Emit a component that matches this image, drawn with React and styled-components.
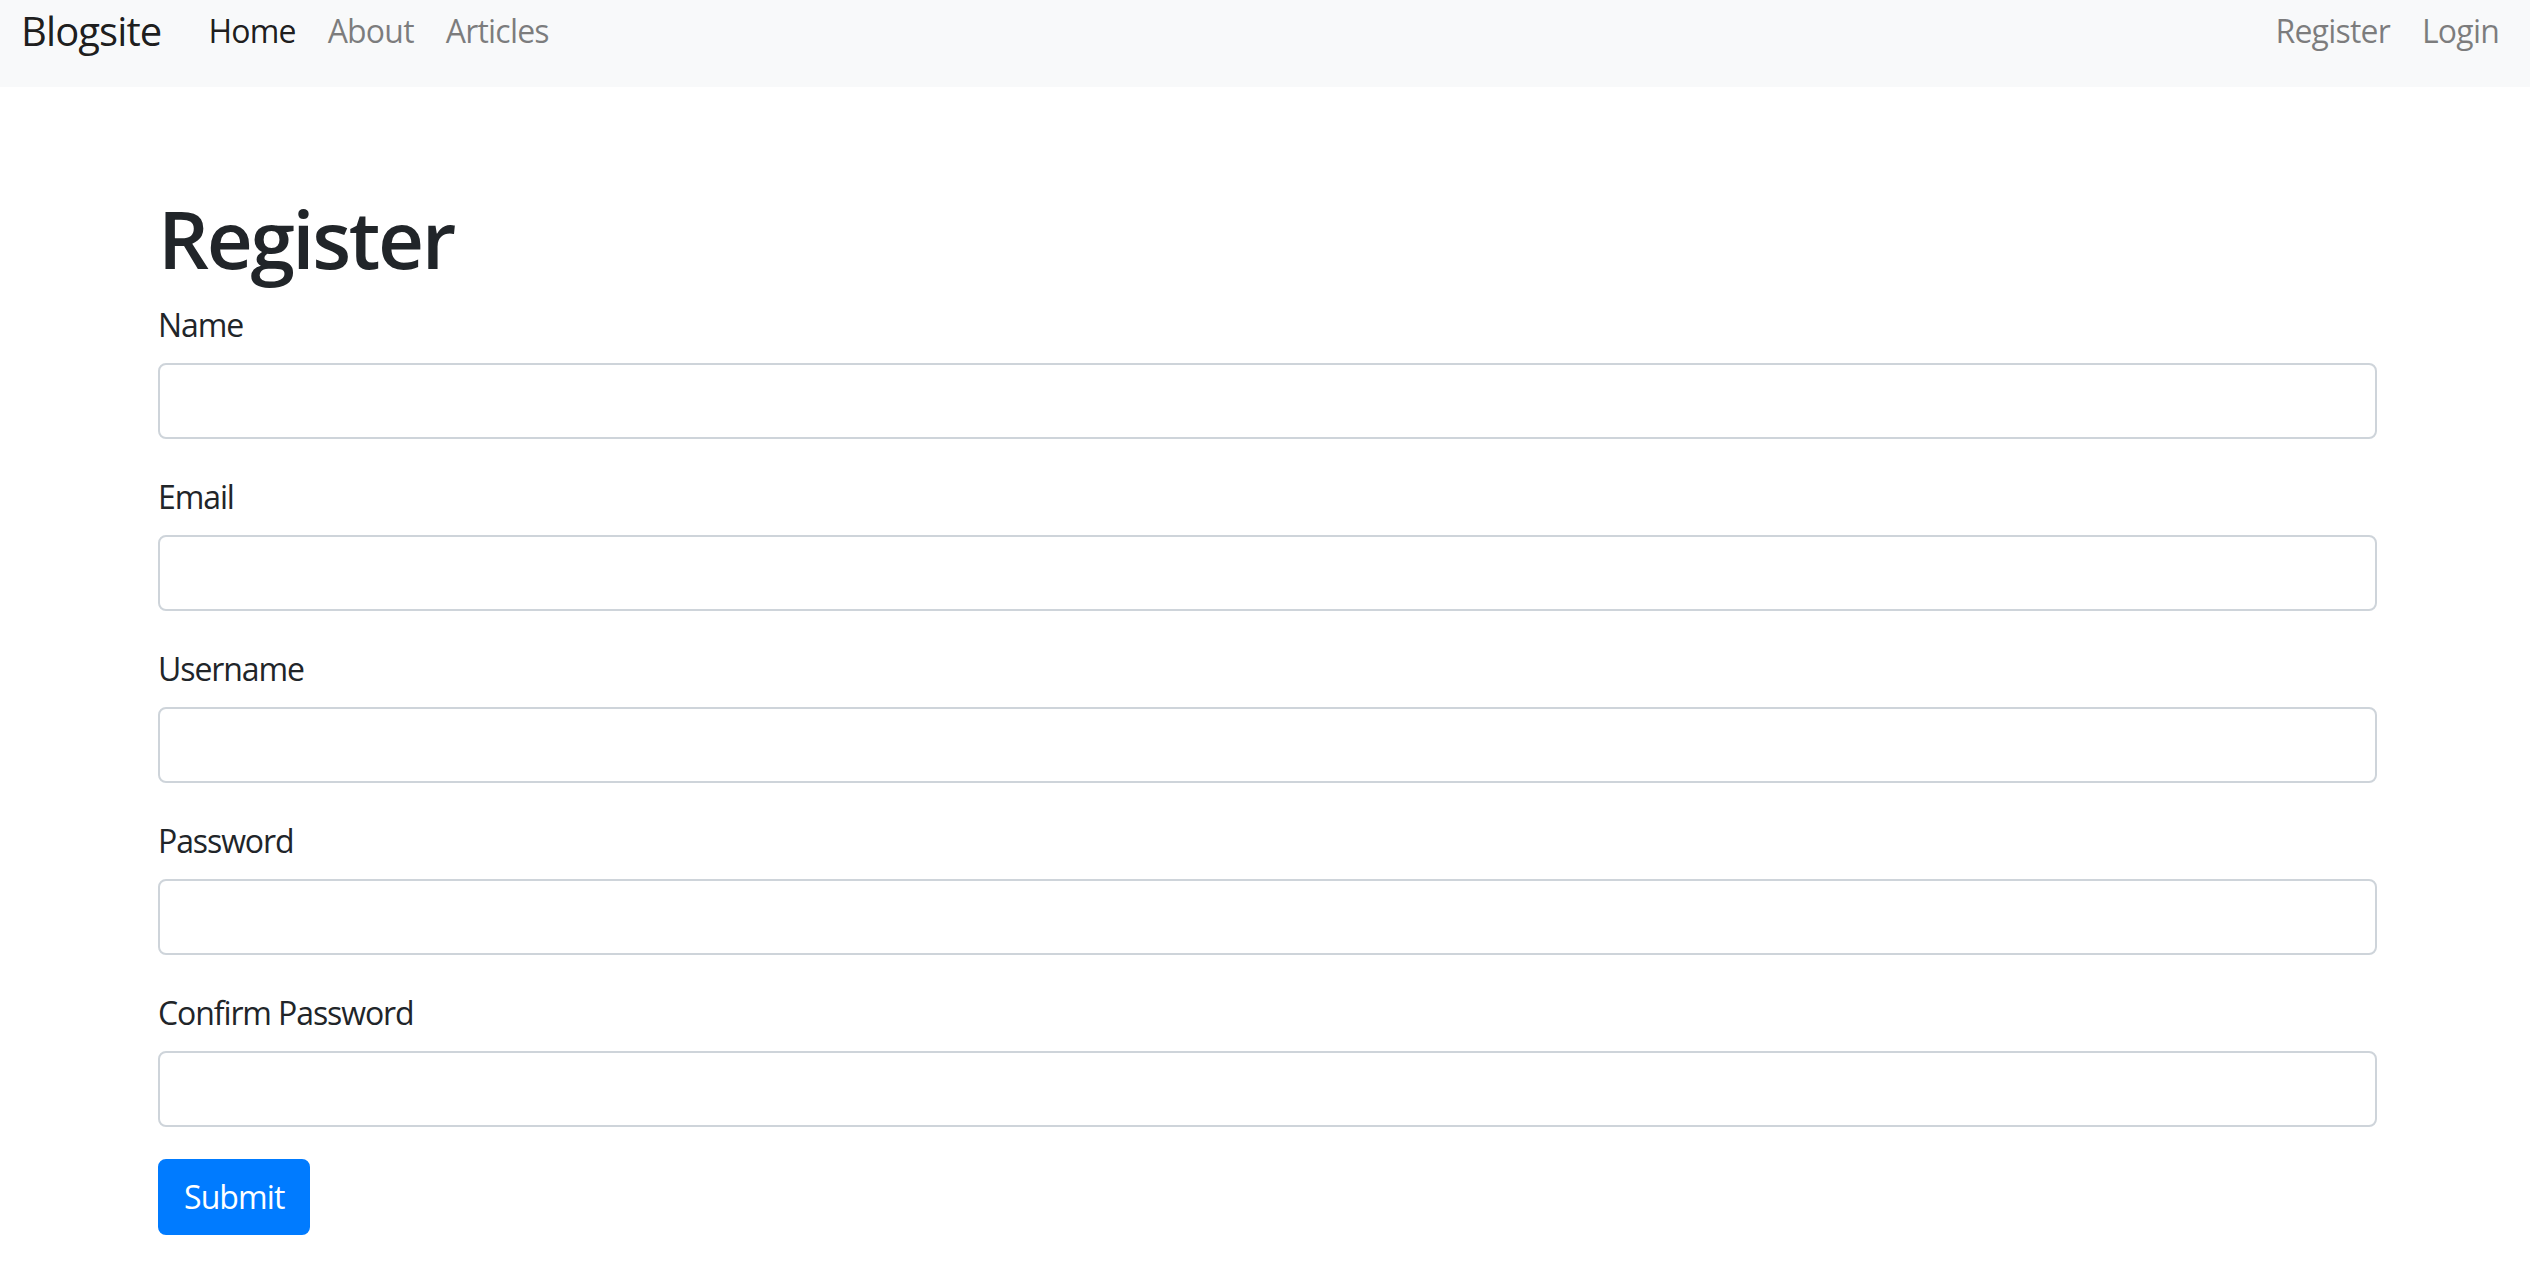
import React from "react";
import styled, { createGlobalStyle } from "styled-components";

const Global = createGlobalStyle`
  html, body { margin: 0; padding: 0; background: #fff; }
  body {
    font-family: "Open Sans", "Noto Sans", "Liberation Sans", sans-serif;
    color: #212529;
    font-size: 32px;
    line-height: 1.5;
  }
  * { box-sizing: border-box; }
`;

const Navbar = styled.nav`
  height: 87px;
  background: #f8f9fa;
  padding: 0 15px 0 21px;
  display: flex;
  align-items: flex-start;
  justify-content: space-between;
`;

const NavLeft = styled.div`
  display: flex;
  align-items: flex-start;
`;

const Brand = styled.a`
  font-size: 40px;
  line-height: 60px;
  padding-top: 1px;
  color: rgba(0, 0, 0, 0.9);
  text-decoration: none;
  margin-right: 31px;
  letter-spacing: -0.9px;
`;

const NavList = styled.div`
  display: flex;
`;

const NavLink = styled.a`
  font-size: 32px;
  line-height: 48px;
  padding: 7px 16px 0;
  color: ${(p) => (p.$active ? "rgba(0,0,0,0.9)" : "rgba(0,0,0,0.5)")};
  text-decoration: none;
  letter-spacing: -0.8px;
`;

const Main = styled.main`
  width: 2219px;
  margin-left: 158px;
  padding-top: 103px;
`;

const Title = styled.h1`
  margin: 0 0 13px;
  font-size: 80px;
  line-height: 96px;
  font-weight: 600;
  letter-spacing: -2.4px;
  color: #212529;
`;

const Group = styled.div`
  margin-bottom: 32px;
`;

const Label = styled.label`
  display: block;
  font-size: 32px;
  line-height: 48px;
  padding-top: 2px;
  margin-bottom: 14px;
  letter-spacing: -1.1px;
`;

const Input = styled.input`
  display: block;
  width: 100%;
  height: 76px;
  padding: 12px 24px;
  font-size: 32px;
  font-family: inherit;
  border: 2px solid #ced4da;
  border-radius: 8px;
  background: #fff;
  color: #495057;
  outline: none;
`;

const Button = styled.button`
  height: 76px;
  padding: 0 24px;
  font-size: 32px;
  font-family: inherit;
  line-height: 48px;
  color: #fff;
  background: #007bff;
  border: 2px solid #007bff;
  border-radius: 8px;
  letter-spacing: -0.9px;
  cursor: pointer;
`;

const fields = [
  { label: "Name", type: "text" },
  { label: "Email", type: "email" },
  { label: "Username", type: "text" },
  { label: "Password", type: "password" },
  { label: "Confirm Password", type: "password" },
];

export default function App() {
  return (
    <>
      <Global />
      <Navbar>
        <NavLeft>
          <Brand href="#">Blogsite</Brand>
          <NavList>
            <NavLink href="#" $active>Home</NavLink>
            <NavLink href="#">About</NavLink>
            <NavLink href="#">Articles</NavLink>
          </NavList>
        </NavLeft>
        <NavList>
          <NavLink href="#">Register</NavLink>
          <NavLink href="#">Login</NavLink>
        </NavList>
      </Navbar>
      <Main>
        <Title>Register</Title>
        <form onSubmit={(e) => e.preventDefault()}>
          {fields.map((f) => (
            <Group key={f.label}>
              <Label>{f.label}</Label>
              <Input type={f.type} />
            </Group>
          ))}
          <Button type="submit">Submit</Button>
        </form>
      </Main>
    </>
  );
}
